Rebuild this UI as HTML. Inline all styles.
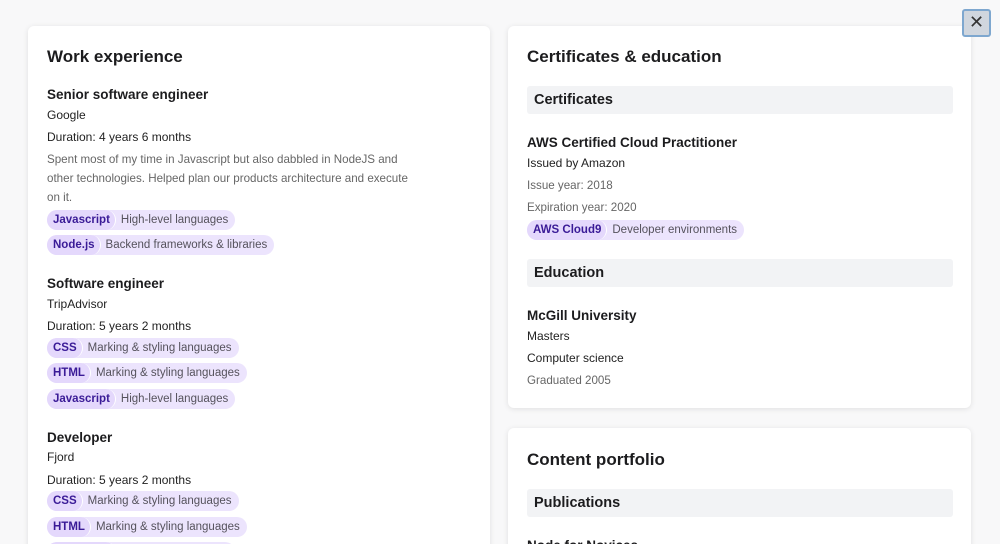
<!DOCTYPE html>
<html><head><meta charset="utf-8"><style>
*{margin:0;padding:0;box-sizing:border-box}
html,body{width:1000px;height:544px;overflow:hidden}
body{background:#f8f8f9;font-family:"Liberation Sans",sans-serif;color:#1c1c1e;position:relative}
.card{position:absolute;background:#fff;border-radius:6px;box-shadow:0 1px 6px rgba(0,0,0,.1)}
.t{position:absolute;white-space:nowrap;line-height:1}
.h{font-size:17px;font-weight:600}
.s{font-size:13.5px;font-weight:700}
.b{font-size:12px;color:#222}
.g{font-size:11.6px;color:#666}
.bar{position:absolute;background:#f2f3f5;border-radius:3px;height:28px;font-size:14.5px;font-weight:700;padding-left:7px;line-height:29px}
.pill{position:absolute;display:flex;height:20px;border-radius:10px;background:#ece4fd;font-size:11.5px;line-height:20px}
.pill b{background:#e4d8fc;color:#3a1b97;border-radius:10px;padding:0 5px 0 6px;border-right:1.5px solid #fff}
.pill span{color:#55525c;padding:0 7px 0 5px}
.x{position:absolute;left:962px;top:9px;width:29px;height:28px;background:#d0d6de;border:2px solid #7ea7cf;border-radius:3px;font-size:18px;text-align:center;line-height:23px;color:#333}
</style></head><body>
<div class="card" style="left:28px;top:26px;width:462px;height:530px"></div>
<div class="card" style="left:508px;top:26px;width:463px;height:382px"></div>
<div class="card" style="left:508px;top:428px;width:463px;height:130px"></div>

<div class="t h" style="left:47px;top:48px">Work experience</div>
<div class="t s" style="left:47px;top:88px">Senior software engineer</div>
<div class="t b" style="left:47px;top:109px">Google</div>
<div class="t b" style="left:47px;top:131px">Duration: 4 years 6 months</div>
<div class="t g" style="left:47px;top:154px">Spent most of my time in Javascript but also dabbled in NodeJS and</div>
<div class="t g" style="left:47px;top:173px">other technologies. Helped plan our products architecture and execute</div>
<div class="t g" style="left:47px;top:192px">on it.</div>
<div class="pill" style="left:47px;top:210px"><b>Javascript</b><span>High-level languages</span></div>
<div class="pill" style="left:47px;top:235px"><b>Node.js</b><span>Backend frameworks &amp; libraries</span></div>

<div class="t s" style="left:47px;top:277px">Software engineer</div>
<div class="t b" style="left:47px;top:298px">TripAdvisor</div>
<div class="t b" style="left:47px;top:320px">Duration: 5 years 2 months</div>
<div class="pill" style="left:47px;top:338px"><b>CSS</b><span>Marking &amp; styling languages</span></div>
<div class="pill" style="left:47px;top:363px"><b>HTML</b><span>Marking &amp; styling languages</span></div>
<div class="pill" style="left:47px;top:389px"><b>Javascript</b><span>High-level languages</span></div>

<div class="t s" style="left:47px;top:431px">Developer</div>
<div class="t b" style="left:47px;top:451px">Fjord</div>
<div class="t b" style="left:47px;top:474px">Duration: 5 years 2 months</div>
<div class="pill" style="left:47px;top:491px"><b>CSS</b><span>Marking &amp; styling languages</span></div>
<div class="pill" style="left:47px;top:517px"><b>HTML</b><span>Marking &amp; styling languages</span></div>
<div class="pill" style="left:47px;top:542px"><b>Javascript</b><span>High-level languages</span></div>

<div class="t h" style="left:527px;top:48px">Certificates &amp; education</div>
<div class="bar" style="left:527px;top:86px;width:426px">Certificates</div>
<div class="t s" style="left:527px;top:136px">AWS Certified Cloud Practitioner</div>
<div class="t b" style="left:527px;top:157px">Issued by Amazon</div>
<div class="t g" style="left:527px;top:180px">Issue year: 2018</div>
<div class="t g" style="left:527px;top:202px">Expiration year: 2020</div>
<div class="pill" style="left:527px;top:220px"><b>AWS Cloud9</b><span>Developer environments</span></div>
<div class="bar" style="left:527px;top:259px;width:426px">Education</div>
<div class="t s" style="left:527px;top:309px">McGill University</div>
<div class="t b" style="left:527px;top:330px">Masters</div>
<div class="t b" style="left:527px;top:352px">Computer science</div>
<div class="t g" style="left:527px;top:375px">Graduated 2005</div>

<div class="t h" style="left:527px;top:451px">Content portfolio</div>
<div class="bar" style="left:527px;top:489px;width:426px">Publications</div>
<div class="t s" style="left:527px;top:539px">Node for Novices</div>

<div class="x">✕</div>
</body></html>
